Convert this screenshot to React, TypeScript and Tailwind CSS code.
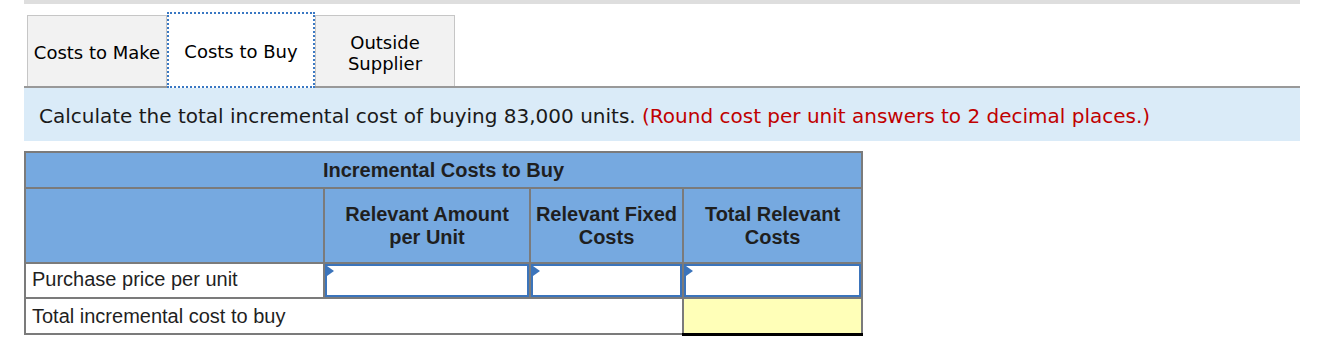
import React from "react";

const tabs = [
  { label: "Costs to Make", active: false },
  { label: "Costs to Buy", active: true },
  { label: "Outside\nSupplier", active: false },
];

function Tab({ label, active }: { label: string; active: boolean }) {
  if (active) {
    return (
      <div className="relative -mt-[3px] -mb-[2px] flex h-[76px] w-[148px] items-center justify-center border-2 border-dotted border-[#3a78c3] bg-white pt-[3px]">
        <span className="whitespace-pre text-center">{label}</span>
      </div>
    );
  }
  return (
    <div className="flex h-[71px] items-center justify-center border border-b-0 border-[#c6c6c6] bg-[#f2f2f2] px-[4px] pt-[3px] first:w-[140px] last:w-[140px]">
      <span className="whitespace-pre text-center leading-[21px]">{label}</span>
    </div>
  );
}

function InputCell() {
  return (
    <td className="border-2 border-[#7b7b7b] bg-white p-0">
      <div className="relative h-[33px] border-2 border-[#3b74bb] bg-white">
        <span className="absolute left-0 top-0 h-0 w-0 border-y-[5px] border-l-[7px] border-y-transparent border-l-[#3b74bb]" />
      </div>
    </td>
  );
}

export default function App() {
  return (
    <div className="h-[340px] w-[1344px] bg-white pl-[24px] pr-[44px]">
      <div className="h-[4px] bg-[#dedede]" />

      <div
        className="mt-[11px] flex items-end border-b-2 border-[#999999] pl-[3px] text-[18px] text-black"
        style={{ fontFamily: "'DejaVu Sans', Verdana, sans-serif" }}
      >
        {tabs.map((t) => (
          <Tab key={t.label} label={t.label} active={t.active} />
        ))}
      </div>

      <div
        className="flex h-[53px] items-center bg-[#daebf8] pl-[15px] pt-[3px] text-[20px] text-[#1a1a1a]"
        style={{ fontFamily: "'DejaVu Sans', Verdana, sans-serif" }}
      >
        <span>
          Calculate the total incremental cost of buying 83,000 units.{" "}
          <span className="text-[#c00000]">(Round cost per unit answers to 2 decimal places.)</span>
        </span>
      </div>

      <table
        className="mt-[10px] w-[837px] table-fixed border-collapse border-2 border-[#7b7b7b] text-[20px] text-[#1f1f1f]"
        style={{ fontFamily: "'Liberation Sans', Arial, sans-serif" }}
      >
        <colgroup>
          <col className="w-[299px]" />
          <col className="w-[206px]" />
          <col className="w-[153px]" />
          <col className="w-[179px]" />
        </colgroup>
        <thead>
          <tr className="h-[36px] bg-[#76a9e0]">
            <th colSpan={4} className="border-2 border-[#7b7b7b] text-center font-bold">
              Incremental Costs to Buy
            </th>
          </tr>
          <tr className="h-[75px] bg-[#76a9e0] font-bold leading-[23px]">
            <th className="border-2 border-[#7b7b7b]" />
            <th className="border-2 border-[#7b7b7b] text-center">
              Relevant Amount
              <br />
              per Unit
            </th>
            <th className="border-2 border-[#7b7b7b] text-center">
              Relevant Fixed
              <br />
              Costs
            </th>
            <th className="border-2 border-[#7b7b7b] text-center">
              Total Relevant
              <br />
              Costs
            </th>
          </tr>
        </thead>
        <tbody>
          <tr className="h-[35px]">
            <td className="border-2 border-[#7b7b7b] px-[6px] pb-[3px]">Purchase price per unit</td>
            <InputCell />
            <InputCell />
            <InputCell />
          </tr>
          <tr className="h-[36px]">
            <td colSpan={3} className="border-2 border-[#7b7b7b] px-[6px]">
              Total incremental cost to buy
            </td>
            <td className="border-2 border-b-[3px] border-[#7b7b7b] border-b-black bg-[#ffffb8]" />
          </tr>
        </tbody>
      </table>
    </div>
  );
}
